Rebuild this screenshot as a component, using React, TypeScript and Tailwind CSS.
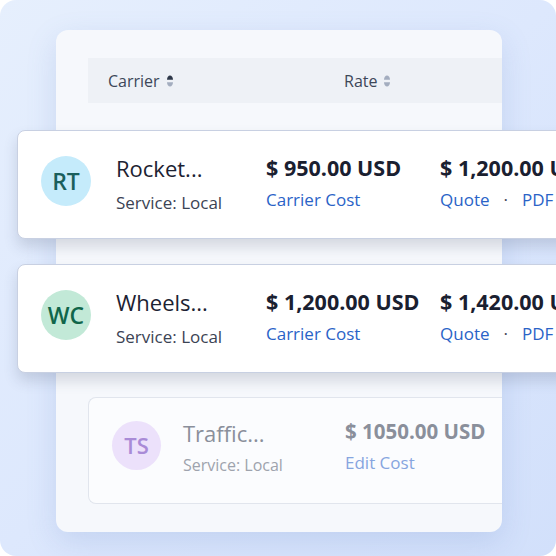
import React from 'react';

type Row = {
  initials: string;
  name: string;
  cost: string;
  quote: string;
  avatar: string;
};

const rows: Row[] = [
  { initials: 'RT', name: 'Rocket...', cost: '$ 950.00 USD', quote: '$ 1,200.00 USD', avatar: 'bg-[#c5ebfb] text-[#1a5f5c]' },
  { initials: 'WC', name: 'Wheels...', cost: '$ 1,200.00 USD', quote: '$ 1,420.00 USD', avatar: 'bg-[#c2e9d7] text-[#10664a]' },
];

const SortIcon: React.FC<{ active?: boolean }> = ({ active }) => (
  <svg width="8" height="14" viewBox="0 0 8 14" className="ml-[6px]">
    <path d="M4 1.5C5.6 1.5 7 3.4 7 5.8H1C1 3.4 2.4 1.5 4 1.5Z" fill={active ? '#2d3748' : '#a3adbf'} />
    <path d="M4 12.5C5.6 12.5 7 10.6 7 8.2H1C1 10.6 2.4 12.5 4 12.5Z" fill="#a3adbf" />
  </svg>
);

const FloatingRow: React.FC<{ row: Row; first?: boolean }> = ({ row, first }) => (
  <div
    className={`${first ? 'mt-[27px]' : 'mt-[25px]'} -ml-[71px] w-[620px] h-[109px] flex items-start pt-[23px] pl-[23px] bg-white border border-[#c8d0e2] rounded-lg shadow-[0_8px_14px_rgba(60,70,100,0.18)] relative`}
  >
    <div className={`w-[50px] h-[50px] mt-[2px] rounded-full flex items-center justify-center text-[23px] font-semibold shrink-0 ${row.avatar}`}>
      {row.initials}
    </div>
    <div className="ml-[25px] w-[150px] shrink-0">
      <div className="text-[22px] leading-[28px] text-[#1c2232]">{row.name}</div>
      <div className="mt-[9px] text-[17px] leading-[24px] text-[#3b4354]">Service: Local</div>
    </div>
    <div className="w-[174px] shrink-0">
      <div className="text-[21.5px] leading-[28px] font-bold text-[#1a2030] whitespace-nowrap">{row.cost}</div>
      <div className="mt-[6px] text-[17px] leading-[24px] text-[#2a63c7]">Carrier Cost</div>
    </div>
    <div className="shrink-0">
      <div className="text-[21.5px] leading-[28px] font-bold text-[#1a2030] whitespace-nowrap">{row.quote}</div>
      <div className="mt-[6px] text-[17px] leading-[24px] text-[#2a63c7] flex items-center whitespace-nowrap">
        <span>Quote</span>
        <span className="mx-[14px] text-[#3b4354]">·</span>
        <span>PDF</span>
      </div>
    </div>
  </div>
);

const App: React.FC = () => {
  return (
    <div className="w-[556px] h-[556px] bg-white overflow-hidden" style={{ fontFamily: '"Open Sans", "Noto Sans", sans-serif' }}>
      <div className="w-[556px] h-[556px] rounded-2xl overflow-hidden bg-gradient-to-br from-[#e6effd] via-[#dde8fd] to-[#d2e0fb] pt-[30px]">
        <div className="ml-[56px] w-[446px] rounded-xl bg-[#f6f8fc] pl-[32px] pt-[28px] pb-[28px] shadow-[0_10px_30px_rgba(90,120,190,0.18)]">
          <div className="h-[45px] flex items-center bg-[#eef1f6] text-[16px] text-[#3d4759]">
            <div className="w-[256px] pl-[20px] flex items-center">
              Carrier
              <SortIcon active />
            </div>
            <div className="flex items-center">
              Rate
              <SortIcon />
            </div>
          </div>

          {rows.map((row, i) => (
            <FloatingRow key={row.initials} row={row} first={i === 0} />
          ))}

          <div className="mt-[24px] h-[107px] flex items-start pt-[21px] pl-[23px] bg-[#fbfcfe] border border-r-0 border-[#e1e5ed] rounded-l-lg">
            <div className="w-[49px] h-[49px] mt-[2px] rounded-full flex items-center justify-center text-[22px] font-semibold shrink-0 bg-[#ece1fb] text-[#a98bd7]">
              TS
            </div>
            <div className="ml-[22px] w-[162px] shrink-0">
              <div className="text-[22px] leading-[28px] text-[#8a8f9b]">Traffic...</div>
              <div className="mt-[6px] text-[16px] leading-[24px] text-[#9ea3ad]">Service: Local</div>
            </div>
            <div className="shrink-0 -mt-[2px]">
              <div className="text-[20.5px] leading-[28px] font-bold text-[#8a8f9b] whitespace-nowrap">$ 1050.00 USD</div>
              <div className="mt-[6px] text-[17px] leading-[24px] text-[#86a5df]">Edit Cost</div>
            </div>
          </div>
        </div>
      </div>
    </div>
  );
};

export default App;
